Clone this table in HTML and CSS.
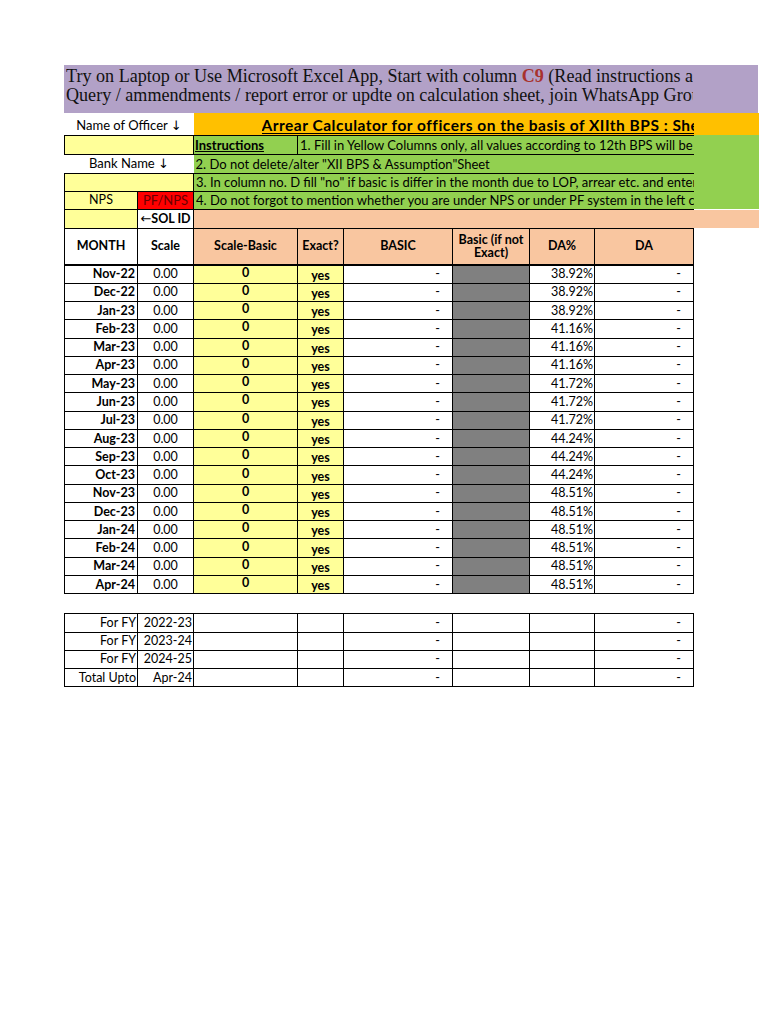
FILE: index.html
```html
<!DOCTYPE html>
<html>
<head>
<meta charset="utf-8">
<title>Arrear Calculator</title>
<link rel="stylesheet" href="styles.css">
</head>
<body>
<div class="sheet">
  <div class="banner">
    <div class="banner-text">
      <div>Try on Laptop or Use Microsoft Excel App, Start with column <b class="c9">C9</b> (Read instructions and follow them carefully)</div>
      <div>Query / ammendments / report error or updte on calculation sheet, join WhatsApp Group</div>
    </div>
  </div>

  <table class="grid">
    <colgroup>
      <col class="ca"><col class="cb"><col class="cc"><col class="cd"><col class="ce"><col class="cf"><col class="cg"><col class="ch"><col class="ci">
    </colgroup>
    <tr class="r-title">
      <td colspan="2" class="label lab-top">Name of Officer <span class="arw">↓</span></td>
      <td colspan="6" class="title"><div class="clip"><span class="title-text">Arrear Calculator for officers on the basis of XIIth BPS : Sheet for Arrear calculation</span></div></td>
      <td class="title-ext"></td>
    </tr>
    <tr class="r-a">
      <td colspan="2" class="input"></td>
      <td class="instr-head">Instructions</td>
      <td colspan="5" class="instr"><div class="clip">1. Fill in Yellow Columns only, all values according to 12th BPS will be calculated automatically</div></td>
      <td class="green-ext"></td>
    </tr>
    <tr class="r-a">
      <td colspan="2" class="label">Bank Name <span class="arw">↓</span></td>
      <td colspan="6" class="instr"><div class="clip">2. Do not delete/alter "XII BPS &amp; Assumption"Sheet</div></td>
      <td class="green-ext"></td>
    </tr>
    <tr class="r-b">
      <td colspan="2" class="input"></td>
      <td colspan="6" class="instr"><div class="clip">3. In column no. D fill "no" if basic is differ in the month due to LOP, arrear etc. and enter the actual basic</div></td>
      <td class="green-ext"></td>
    </tr>
    <tr class="r-b">
      <td class="input center">NPS</td>
      <td class="pfnps">PF/NPS</td>
      <td colspan="6" class="instr"><div class="clip">4. Do not forgot to mention whether you are under NPS or under PF system in the left cell</div></td>
      <td class="green-ext"></td>
    </tr>
    <tr class="r-a">
      <td class="input"></td>
      <td class="sol"><span class="arw">←</span>SOL ID</td>
      <td colspan="7" class="peach-band"></td>
    </tr>
    <tr class="r-head">
      <th class="h-white">MONTH</th>
      <th class="h-white">Scale</th>
      <th>Scale-Basic</th>
      <th>Exact?</th>
      <th>BASIC</th>
      <th class="h-two">Basic (if not Exact)</th>
      <th>DA%</th>
      <th>DA</th>
      <td class="blank"></td>
    </tr>
  </table>

  <table class="grid data">
    <colgroup>
      <col class="ca"><col class="cb"><col class="cc"><col class="cd"><col class="ce"><col class="cf"><col class="cg"><col class="ch"><col class="ci">
    </colgroup>
    <tbody>
      <tr><td class="m">Nov-22</td><td class="sc">0.00</td><td class="y zero">0</td><td class="y ex">yes</td><td class="dash">-</td><td class="gray"></td><td class="pct">38.92%</td><td class="dash">-</td><td class="blank"></td></tr>
      <tr><td class="m">Dec-22</td><td class="sc">0.00</td><td class="y zero">0</td><td class="y ex">yes</td><td class="dash">-</td><td class="gray"></td><td class="pct">38.92%</td><td class="dash">-</td><td class="blank"></td></tr>
      <tr><td class="m">Jan-23</td><td class="sc">0.00</td><td class="y zero">0</td><td class="y ex">yes</td><td class="dash">-</td><td class="gray"></td><td class="pct">38.92%</td><td class="dash">-</td><td class="blank"></td></tr>
      <tr><td class="m">Feb-23</td><td class="sc">0.00</td><td class="y zero">0</td><td class="y ex">yes</td><td class="dash">-</td><td class="gray"></td><td class="pct">41.16%</td><td class="dash">-</td><td class="blank"></td></tr>
      <tr><td class="m">Mar-23</td><td class="sc">0.00</td><td class="y zero">0</td><td class="y ex">yes</td><td class="dash">-</td><td class="gray"></td><td class="pct">41.16%</td><td class="dash">-</td><td class="blank"></td></tr>
      <tr><td class="m">Apr-23</td><td class="sc">0.00</td><td class="y zero">0</td><td class="y ex">yes</td><td class="dash">-</td><td class="gray"></td><td class="pct">41.16%</td><td class="dash">-</td><td class="blank"></td></tr>
      <tr><td class="m">May-23</td><td class="sc">0.00</td><td class="y zero">0</td><td class="y ex">yes</td><td class="dash">-</td><td class="gray"></td><td class="pct">41.72%</td><td class="dash">-</td><td class="blank"></td></tr>
      <tr><td class="m">Jun-23</td><td class="sc">0.00</td><td class="y zero">0</td><td class="y ex">yes</td><td class="dash">-</td><td class="gray"></td><td class="pct">41.72%</td><td class="dash">-</td><td class="blank"></td></tr>
      <tr><td class="m">Jul-23</td><td class="sc">0.00</td><td class="y zero">0</td><td class="y ex">yes</td><td class="dash">-</td><td class="gray"></td><td class="pct">41.72%</td><td class="dash">-</td><td class="blank"></td></tr>
      <tr><td class="m">Aug-23</td><td class="sc">0.00</td><td class="y zero">0</td><td class="y ex">yes</td><td class="dash">-</td><td class="gray"></td><td class="pct">44.24%</td><td class="dash">-</td><td class="blank"></td></tr>
      <tr><td class="m">Sep-23</td><td class="sc">0.00</td><td class="y zero">0</td><td class="y ex">yes</td><td class="dash">-</td><td class="gray"></td><td class="pct">44.24%</td><td class="dash">-</td><td class="blank"></td></tr>
      <tr><td class="m">Oct-23</td><td class="sc">0.00</td><td class="y zero">0</td><td class="y ex">yes</td><td class="dash">-</td><td class="gray"></td><td class="pct">44.24%</td><td class="dash">-</td><td class="blank"></td></tr>
      <tr><td class="m">Nov-23</td><td class="sc">0.00</td><td class="y zero">0</td><td class="y ex">yes</td><td class="dash">-</td><td class="gray"></td><td class="pct">48.51%</td><td class="dash">-</td><td class="blank"></td></tr>
      <tr><td class="m">Dec-23</td><td class="sc">0.00</td><td class="y zero">0</td><td class="y ex">yes</td><td class="dash">-</td><td class="gray"></td><td class="pct">48.51%</td><td class="dash">-</td><td class="blank"></td></tr>
      <tr><td class="m">Jan-24</td><td class="sc">0.00</td><td class="y zero">0</td><td class="y ex">yes</td><td class="dash">-</td><td class="gray"></td><td class="pct">48.51%</td><td class="dash">-</td><td class="blank"></td></tr>
      <tr><td class="m">Feb-24</td><td class="sc">0.00</td><td class="y zero">0</td><td class="y ex">yes</td><td class="dash">-</td><td class="gray"></td><td class="pct">48.51%</td><td class="dash">-</td><td class="blank"></td></tr>
      <tr><td class="m">Mar-24</td><td class="sc">0.00</td><td class="y zero">0</td><td class="y ex">yes</td><td class="dash">-</td><td class="gray"></td><td class="pct">48.51%</td><td class="dash">-</td><td class="blank"></td></tr>
      <tr><td class="m">Apr-24</td><td class="sc">0.00</td><td class="y zero">0</td><td class="y ex">yes</td><td class="dash">-</td><td class="gray"></td><td class="pct">48.51%</td><td class="dash">-</td><td class="blank"></td></tr>
    </tbody>
  </table>

  <table class="grid summary">
    <colgroup>
      <col class="ca"><col class="cb"><col class="cc"><col class="cd"><col class="ce"><col class="cf"><col class="cg"><col class="ch"><col class="ci">
    </colgroup>
    <tr><td class="r">For FY</td><td class="r">2022-23</td><td></td><td></td><td class="dash">-</td><td></td><td></td><td class="dash">-</td><td class="blank"></td></tr>
    <tr><td class="r">For FY</td><td class="r">2023-24</td><td></td><td></td><td class="dash">-</td><td></td><td></td><td class="dash">-</td><td class="blank"></td></tr>
    <tr><td class="r">For FY</td><td class="r">2024-25</td><td></td><td></td><td class="dash">-</td><td></td><td></td><td class="dash">-</td><td class="blank"></td></tr>
    <tr><td class="r">Total Upto</td><td class="r">Apr-24</td><td></td><td></td><td class="dash">-</td><td></td><td></td><td class="dash">-</td><td class="blank"></td></tr>
  </table>
</div>
</body>
</html>
```

FILE: styles.css
```css
html, body {
  margin: 0;
  padding: 0;
  background: #ffffff;
}

body {
  font-family: Lato, "Liberation Sans", sans-serif;
  font-size: 12.5px;
  color: #000;
}

.sheet {
  padding: 65px 0 0 64px;
  width: 694px;
}

/* ---------- banner ---------- */
.banner {
  background: #b2a1c7;
  height: 48px;
  box-sizing: border-box;
  padding: 2px 0 0 2px;
}

.banner-text {
  width: 627px;
  overflow: hidden;
  white-space: nowrap;
  font-family: "Liberation Serif", "Times New Roman", serif;
  font-size: 18.1px;
  line-height: 19px;
  color: #111;
}

.c9 {
  color: #a8322d;
}

/* ---------- grid ---------- */
.grid {
  border-collapse: collapse;
  table-layout: fixed;
  width: 694px;
}

.ca { width: 73px; }
.cb { width: 56px; }
.cc { width: 104px; }
.cd { width: 46px; }
.ce { width: 109px; }
.cf { width: 77px; }
.cg { width: 65px; }
.ch { width: 99px; }
.ci { width: 65px; }

td, th {
  padding: 0;
  white-space: nowrap;
  overflow: hidden;
  line-height: 14px;
}

.clip {
  overflow: hidden;
  white-space: nowrap;
}

/* ---------- top section ---------- */
.r-title { height: 22px; }
.r-a { height: 19px; }
.r-b { height: 18px; }

.label {
  text-align: center;
  background: #fff;
  vertical-align: middle;
  font-size: 13px;
}

.lab-top {
  vertical-align: bottom;
  padding-bottom: 2px;
}

.arw {
  font-family: "DejaVu Sans", sans-serif;
  font-size: 13px;
  font-weight: 400;
}

.title {
  background: #ffc000;
  border-bottom: 1px solid #000;
  padding-left: 68px;
  vertical-align: bottom;
  padding-bottom: 1px;
}

.title-text {
  font-weight: 700;
  font-size: 15.5px;
  letter-spacing: 0.5px;
  line-height: 18px;
  text-decoration: underline;
  text-decoration-thickness: 1.5px;
  text-underline-offset: 2px;
}

.title-ext {
  background: #ffc000;
}

.input {
  background: #ffff99;
  border: 1px solid #000;
}

.center {
  text-align: center;
}

.instr-head {
  background: #92d050;
  border: 1px solid #000;
  font-weight: 700;
  font-size: 13px;
  text-decoration: underline;
  padding-left: 1px;
}

.instr {
  background: #92d050;
  border-bottom: 1px solid #000;
  padding-left: 2px;
  font-size: 13px;
}

.green-ext {
  background: #92d050;
}

.pfnps {
  background: #ff0000;
  color: #6a0000;
  border: 1px solid #000;
  text-align: center;
  font-size: 13px;
}

.sol {
  background: #fff;
  border: 1px solid #000;
  font-weight: 700;
  text-align: center;
}

.peach-band {
  background: #f9c6a0;
}

/* header */
.r-head { height: 36px; }

th {
  background: #f9c6a0;
  border: 1px solid #000;
  font-weight: 700;
  text-align: center;
  vertical-align: middle;
}

th.h-white {
  background: #fff;
}

th.h-two {
  white-space: normal;
  line-height: 13px;
}

.blank {
  border: none;
  background: #fff;
}

/* ---------- data ---------- */
.data tr { height: 18.28px; }

.data td, .summary td {
  border: 1px solid #000;
  vertical-align: middle;
}

.data td.blank, .summary td.blank {
  border: none;
  border-left: 1px solid #000;
}

.m {
  text-align: right;
  font-weight: 700;
  padding-right: 2px;
}

.sc {
  text-align: center;
}

.y {
  background: #ffff99;
  text-align: center;
  font-weight: 700;
}

.zero {
  padding-bottom: 3px;
}

.ex {
  padding-top: 3px;
}

.dash {
  text-align: right;
  padding-right: 12px;
}

.gray {
  background: #808080;
}

.pct {
  text-align: right;
  padding-right: 1px;
}

/* ---------- summary ---------- */
.summary {
  margin-top: 19px;
}

.summary tr { height: 18.25px; }

.r {
  text-align: right;
  padding-right: 1px;
}
```
